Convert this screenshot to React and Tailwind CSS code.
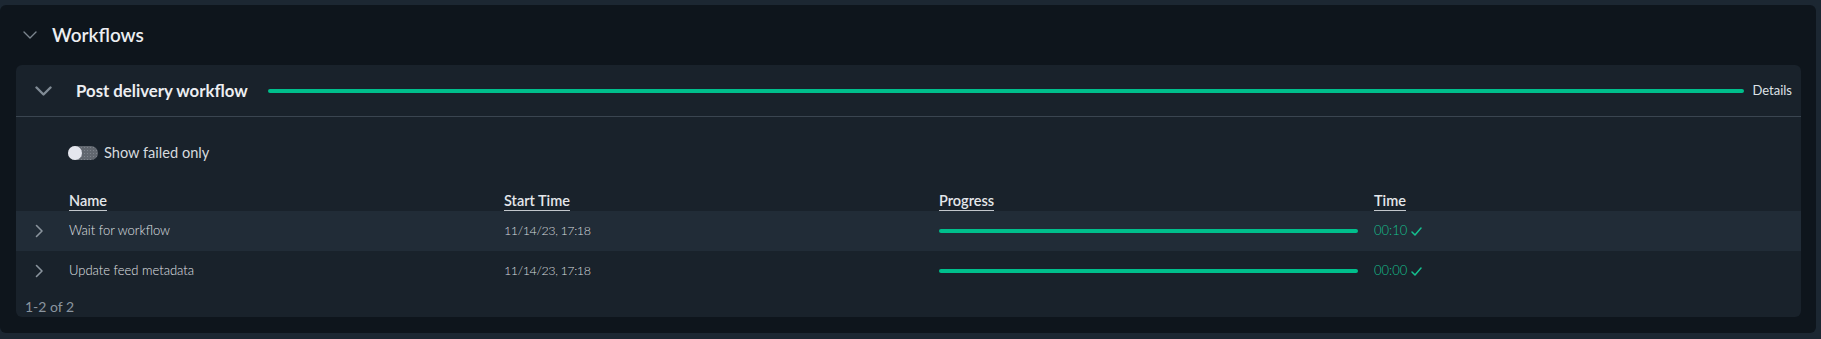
import React from "react";

const font = { fontFamily: "Lato, 'Noto Sans', sans-serif" };

const rows = [
  { name: "Wait for workflow", start: "11/14/23, 17:18", time: "00:10", hover: true },
  { name: "Update feed metadata", start: "11/14/23, 17:18", time: "00:00", hover: false },
];

function HeaderCell({ children }) {
  return (
    <div className="flex items-end h-[18px]">
      <span className="text-[14.5px] font-semibold leading-[16px] text-[#e4e7ea] border-b border-[#c2c7cc] pb-[1px]">
        {children}
      </span>
    </div>
  );
}

export default function App() {
  return (
    <div className="w-full h-[339px] bg-[#1c2732] pt-[5px] pr-[5px] pb-[6px]" style={font}>
      <div className="h-full bg-[#0e151c] rounded-[6px] pl-[16px] pr-[15px] flex flex-col">
        {/* Section header */}
        <div className="h-[60px] flex items-center">
          <svg width="14" height="8" viewBox="0 0 14 8" fill="none" stroke="#7b858e" strokeWidth="1.4" strokeLinecap="round" strokeLinejoin="round" className="ml-[7px]">
            <path d="M1 1L7 7L13 1" />
          </svg>
          <span className="ml-[15px] text-[19px] font-semibold text-[#eceef1]">Workflows</span>
        </div>

        {/* Card */}
        <div className="bg-[#19222b] rounded-[6px] flex flex-col">
          <div className="h-[52px] flex items-center border-b border-[#3a4550] pr-[9px]">
            <svg width="17" height="10" viewBox="0 0 17 10" fill="none" stroke="#808b95" strokeWidth="2.4" strokeLinecap="round" strokeLinejoin="round" className="ml-[19px]">
              <path d="M1.5 1.5L8.5 8.5L15.5 1.5" />
            </svg>
            <span className="ml-[24px] text-[16.8px] font-bold text-[#eceef1] whitespace-nowrap">Post delivery workflow</span>
            <div className="ml-[20px] flex-1 h-[4px] rounded-full bg-[#00bf8c]" />
            <span className="ml-[8px] text-[13px] text-[#dde1e5]">Details</span>
          </div>

          <div className="pt-[28px] pl-[52px] flex items-center h-[16px] box-content">
            <div className="relative w-[30px] h-[14px] rounded-full bg-[#61676f] bg-[radial-gradient(#7d838b_1px,transparent_1px)] bg-[length:3px_3px]">
              <div className="absolute left-0 top-0 w-[14px] h-[14px] rounded-full bg-[#e4e6ee]" />
            </div>
            <span className="ml-[6px] text-[14.6px] text-[#d6dade]">Show failed only</span>
          </div>

          <div className="mt-[32px] flex">
            <div className="w-[53px]" />
            <div className="grid grid-cols-[435px_435px_435px_1fr] flex-1">
              <HeaderCell>Name</HeaderCell>
              <HeaderCell>Start Time</HeaderCell>
              <HeaderCell>Progress</HeaderCell>
              <HeaderCell>Time</HeaderCell>
            </div>
          </div>

          {rows.map((r) => (
            <div key={r.name} className={`h-[40px] flex items-center ${r.hover ? "bg-[#212c37]" : ""}`}>
              <div className="w-[53px] pl-[18px] flex items-center">
                <svg width="10" height="14" viewBox="0 0 10 14" fill="none" stroke="#8a949d" strokeWidth="1.6" strokeLinecap="round" strokeLinejoin="round">
                  <path d="M2.5 1.5L8 7L2.5 12.5" />
                </svg>
              </div>
              <div className="grid grid-cols-[435px_435px_435px_1fr] flex-1 items-center">
                <span className="text-[13px] font-light text-[#e0e3e7]">{r.name}</span>
                <span className="text-[12.5px] font-light tracking-[-0.4px] text-[#d6dade]">{r.start}</span>
                <div className="w-[419px] h-[4px] rounded-full bg-[#00bf8c]" />
                <div className="flex items-center gap-[4px]">
                  <span className="text-[13px] font-light text-[#15c08f]">{r.time}</span>
                  <svg width="11" height="9" viewBox="0 0 11 9" fill="none" stroke="#15c08f" strokeWidth="1.5" strokeLinecap="round" strokeLinejoin="round">
                    <path d="M1 5L4 8L10 1" />
                  </svg>
                </div>
              </div>
            </div>
          ))}

          <div className="h-[26px] pl-[9px] pt-[8px]">
            <span className="block text-[14px] leading-[16px] text-[#8a959f]">1-2 of 2</span>
          </div>
        </div>
      </div>
    </div>
  );
}
